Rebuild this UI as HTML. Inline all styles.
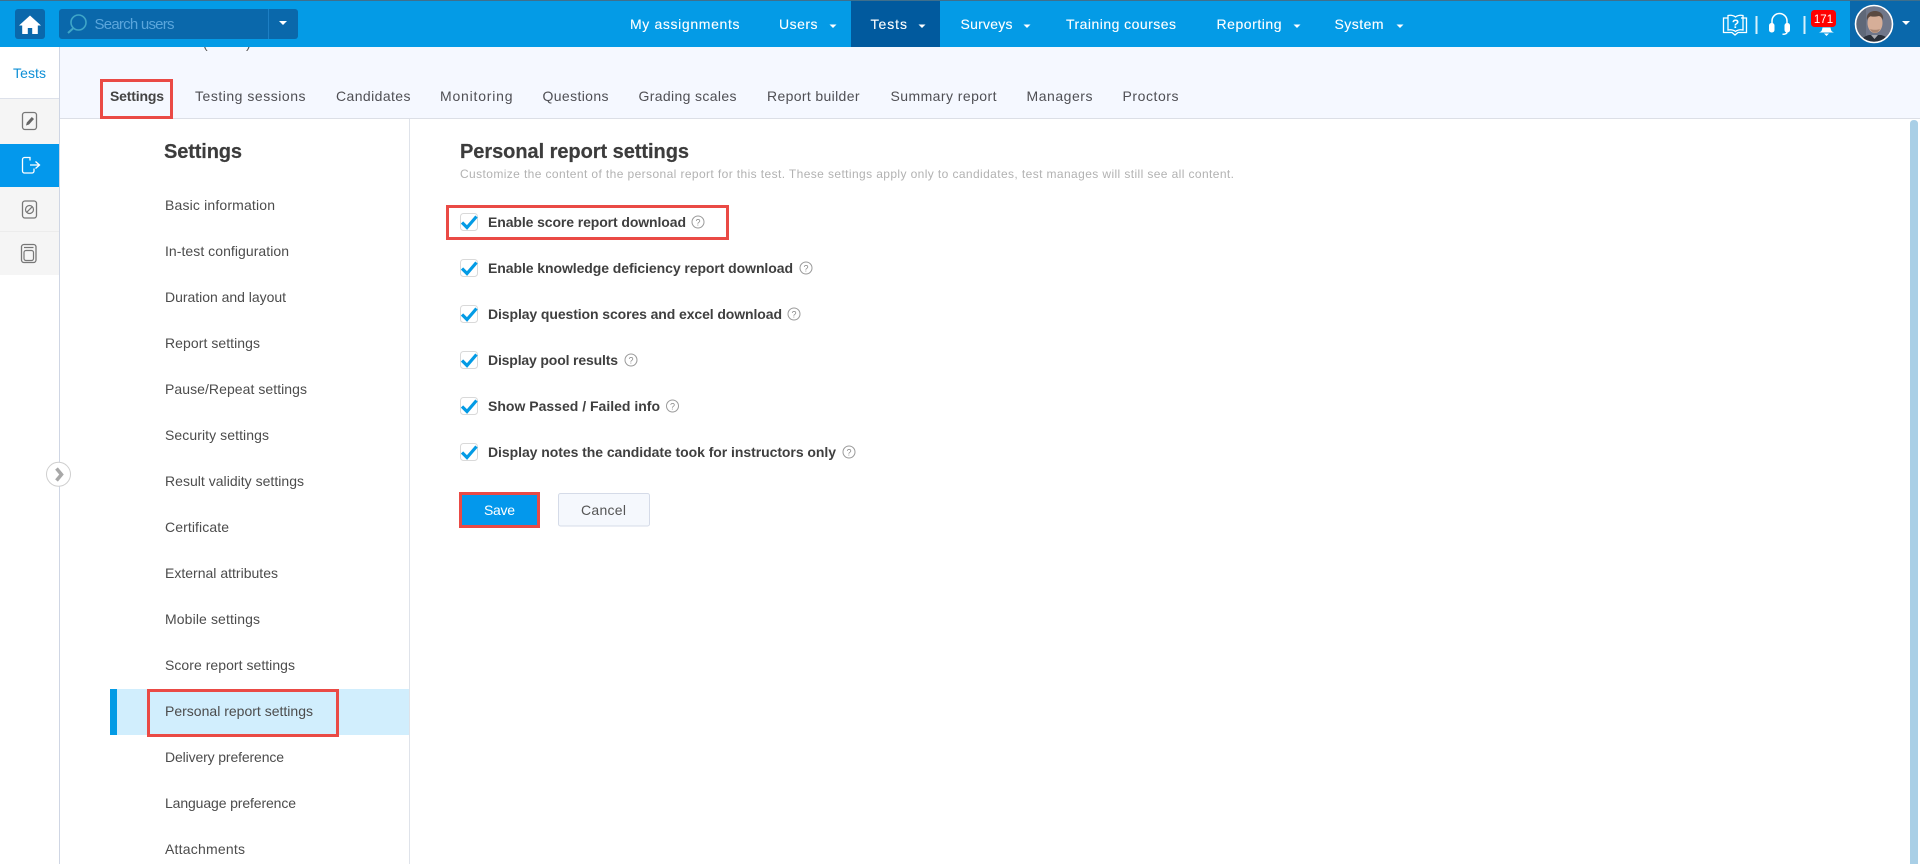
<!DOCTYPE html>
<html lang="en">
<head>
<meta charset="utf-8">
<title>Personal report settings</title>
<style>
html,body{margin:0;padding:0;width:1920px;height:864px;overflow:hidden;background:#fff}
svg{display:block}
text{font-family:"Liberation Sans",sans-serif;font-size:14px;fill:#4a4a4a}
.nav{fill:#fff;stroke:#fff;stroke-width:.1}
.tab{fill:#4f4f54}
.menu{fill:#4c4c4c}
.lbl{font-weight:700;fill:#3f3f3f}
.red{fill:none;stroke:#ea4a45;stroke-width:3}
.help circle{fill:none;stroke:#9a9a9a;stroke-width:1}
.help text{font-size:9px;fill:#8a8a8a;text-anchor:middle}
.cb rect{fill:#fff;stroke:#d9d9d9;stroke-width:1}
.cb path{fill:none;stroke:#039be5;stroke-width:3.2}
.ar{fill:#fff}
.hd{font-size:20px;font-weight:700;fill:#3c3c3c;stroke:#3c3c3c;stroke-width:.2}
</style>
</head>
<body>
<svg width="1920" height="864" viewBox="0 0 1920 864" xmlns="http://www.w3.org/2000/svg">
  <!-- page bands -->
  <rect x="59" y="47" width="1861" height="71" fill="#f5f8ff"/>
  <rect x="59" y="118" width="1861" height="1" fill="#dcdfe6"/>

  <!-- clipped breadcrumb (behind the top bar) -->
  <text x="203" y="48" style="font-size:14px;fill:#555">(</text>
  <text x="246" y="48" style="font-size:14px;fill:#555">)</text>

  <!-- top bar -->
  <rect width="1920" height="47" fill="#049be6"/>
  <rect width="1920" height="1" fill="#3f6f8c"/>
  <rect x="15" y="9" width="30" height="30" rx="3" fill="#0a68ab"/>
  <path d="M30 15.500 19 25.500h3.200V34h5.600v-6h4.400v6h5.600v-8.500H41Z" fill="#fff"/>
  <rect x="59" y="9" width="239" height="30" rx="3" fill="#0a68ab"/>
  <rect x="268" y="9" width="1" height="30" fill="#1d7fc4"/>
  <circle cx="78.500" cy="22.500" r="7.500" fill="none" stroke="#3fa6c8" stroke-width="1.600"/>
  <path d="M73 28.500 68 33" stroke="#3fa6c8" stroke-width="2" fill="none"/>
  <text x="94.500" y="29" textLength="80" style="font-size:15px;fill:#5ba6dc">Search users</text>
  <path class="ar" d="M279 21h8l-4 4Z"/>

  <rect x="851" y="1" width="89" height="46" fill="#015a9e"/>
  <g>
    <text class="nav" x="630" y="29" textLength="109.500">My assignments</text>
    <text class="nav" x="779" y="29" textLength="38.500">Users</text>
    <path class="ar" d="M829.500 24.500h7l-3.500 3.500Z"/>
    <text class="nav" x="870.500" y="29" textLength="36.500">Tests</text>
    <path class="ar" d="M918.500 24.500h7l-3.500 3.500Z"/>
    <text class="nav" x="960.500" y="29" textLength="52">Surveys</text>
    <path class="ar" d="M1023.500 24.500h7l-3.500 3.500Z"/>
    <text class="nav" x="1066" y="29" textLength="110">Training courses</text>
    <text class="nav" x="1216.500" y="29" textLength="65">Reporting</text>
    <path class="ar" d="M1293.500 24.500h7l-3.500 3.500Z"/>
    <text class="nav" x="1334.500" y="29" textLength="49">System</text>
    <path class="ar" d="M1396.500 24.500h7l-3.500 3.500Z"/>
  </g>

  <!-- right icons -->
  <g fill="none" stroke="#fff" stroke-width="1.300">
    <path d="M1728 18h-4.500v14.500h8.500l3 2.500 3-2.500h8.500V18H1741"/>
    <path d="M1728 15.500c3-.6 5.500 0 7.500 1.500 2-1.500 4.500-2.100 7.500-1.500v14.500c-3-.6-5.500 0-7.500 1.500-2-1.500-4.500-2.100-7.500-1.500Z"/>
  </g>
  <text x="1735.500" y="28" style="font-size:12px;font-weight:700;fill:#fff;text-anchor:middle">?</text>
  <rect x="1755.500" y="16" width="2" height="18" fill="#d8f0fb"/>
  <path d="M1772 26v-5a7.500 7.500 0 0 1 15 0v5" fill="none" stroke="#fff" stroke-width="1.500"/>
  <rect x="1769" y="23" width="5.500" height="9.500" rx="2.500" fill="#fff"/>
  <rect x="1784.500" y="23" width="5.500" height="9.500" rx="2.500" fill="#fff"/>
  <path d="M1787 32c0 1.500-2 2.300-4.500 2.300" fill="none" stroke="#fff" stroke-width="1.500"/>
  <rect x="1803.500" y="16" width="2" height="18" fill="#d8f0fb"/>
  <path d="M1819 32.500c2.500-.8 3-2 3.500-5h8c.5 3 1 4.200 3.500 5Z" fill="#fff"/>
  <path d="M1824 33.500h5l-2.500 2.500Z" fill="#fff"/>
  <rect x="1811" y="10" width="25" height="17" rx="3.500" fill="#f00"/>
  <text x="1823.500" y="23" style="font-size:11.500px;fill:#fff;text-anchor:middle">171</text>

  <rect x="1850" y="1" width="70" height="46" fill="#0a68ab"/>
  <clipPath id="av"><circle cx="1874" cy="24" r="18"/></clipPath>
  <g clip-path="url(#av)">
    <rect x="1855" y="5" width="38" height="38" fill="#70778a"/>
    <rect x="1855" y="5" width="11" height="38" fill="#5f6878"/>
    <path d="M1860 44c1-6 5-8 9-9h12c4 1 8 3 9 9Z" fill="#2a2f38"/>
    <path d="M1871 35l3.500 4 3.500-4Z" fill="#a9aab0"/>
    <ellipse cx="1875" cy="23" rx="7.500" ry="10" fill="#d6ae98"/>
    <path d="M1867 20c-1-6 3-9 8-9s9 3 8 9c-1-2-2-3.500-4-4-3 .8-7 .8-8.500.3-1.700.9-2.800 2-3.500 3.700Z" fill="#5a4a42"/>
    <path d="M1870 29c1.500 2.800 3 3.700 5 3.700s3.500-.9 5-3.700c-1.700.7-3.300.8-5 .8s-3.300-.1-5-.8Z" fill="#a98672"/>
  </g>
  <circle cx="1874" cy="24" r="18.500" fill="none" stroke="#fff" stroke-width="1.600"/>
  <path class="ar" d="M1902 21h8l-4 4Z"/>

  <!-- left rail -->
  <rect x="0" y="99" width="59" height="176" fill="#f5f5f5"/>
  <rect x="0" y="98" width="59" height="1" fill="#dde1ea"/>
  <rect x="0" y="144" width="59" height="43" fill="#0398ec"/>
  <rect x="0" y="231" width="59" height="1" fill="#ececec"/>
  <rect x="59" y="47" width="1" height="817" fill="#cfd6e4"/>
  <text x="13" y="78" textLength="33" style="fill:#0d8fd6">Tests</text>
  <rect x="22.500" y="112.500" width="14" height="17" rx="2.500" fill="none" stroke="#777" stroke-width="1.300"/>
  <path d="M26 125.500l.8-3 5-5.500 2.200 2-5 5.500Z" fill="#666"/>
  <path d="M30 160.500V157.500h-5.500a2 2 0 0 0-2 2v11.500a2 2 0 0 0 2 2h7.500a2 2 0 0 0 2-2v-2.500M30 165h9M35.500 161.500l4 3.500-4 3.500" fill="none" stroke="#fff" stroke-width="1.300"/>
  <rect x="22.500" y="201" width="14" height="17" rx="2.500" fill="none" stroke="#777" stroke-width="1.300"/>
  <circle cx="29.500" cy="209.500" r="4" fill="none" stroke="#777" stroke-width="1.200"/>
  <path d="M26.800 212.200l5.400-5.400" stroke="#777" stroke-width="1.200"/>
  <rect x="21.500" y="244.500" width="14.500" height="18" rx="2.500" fill="none" stroke="#777" stroke-width="1.300"/>
  <rect x="24" y="250.500" width="9.500" height="10" rx="2" fill="none" stroke="#777" stroke-width="1.200"/>
  <path d="M24 247.500h9.500" stroke="#777" stroke-width="1.200"/>

  <!-- expand button -->
  <circle cx="58.500" cy="474.300" r="12" fill="#fff" stroke="#cfcfcf" stroke-width="1"/>
  <path d="M56.500 468.500l5 6-5 6" fill="none" stroke="#a8a8a8" stroke-width="3.500"/>

  <!-- tabs -->
  <text x="110" y="101" textLength="54" style="font-weight:700;fill:#444">Settings</text>
  <text class="tab" x="195" y="101" textLength="110.500">Testing sessions</text>
  <text class="tab" x="336" y="101" textLength="74.500">Candidates</text>
  <text class="tab" x="440" y="101" textLength="72.500">Monitoring</text>
  <text class="tab" x="542.500" y="101" textLength="66">Questions</text>
  <text class="tab" x="638.500" y="101" textLength="98">Grading scales</text>
  <text class="tab" x="767" y="101" textLength="92.500">Report builder</text>
  <text class="tab" x="890.500" y="101" textLength="106">Summary report</text>
  <text class="tab" x="1026.500" y="101" textLength="66">Managers</text>
  <text class="tab" x="1122.500" y="101" textLength="56">Proctors</text>
  <rect class="red" x="101.500" y="80.500" width="70" height="37"/>

  <!-- settings menu -->
  <rect x="409" y="119" width="1" height="745" fill="#dfe3ea"/>
  <text class="hd" x="164" y="158" textLength="78">Settings</text>
  <rect x="110" y="689" width="299" height="46" fill="#d1eefd"/>
  <rect x="110" y="689" width="7" height="46" fill="#039be5"/>
  <g>
    <text class="menu" x="165" y="210" textLength="110">Basic information</text>
    <text class="menu" x="165" y="256" textLength="124">In-test configuration</text>
    <text class="menu" x="165" y="302" textLength="121">Duration and layout</text>
    <text class="menu" x="165" y="348" textLength="95">Report settings</text>
    <text class="menu" x="165" y="394" textLength="142">Pause/Repeat settings</text>
    <text class="menu" x="165" y="440" textLength="104">Security settings</text>
    <text class="menu" x="165" y="486" textLength="139">Result validity settings</text>
    <text class="menu" x="165" y="532" textLength="64">Certificate</text>
    <text class="menu" x="165" y="578" textLength="113">External attributes</text>
    <text class="menu" x="165" y="624" textLength="95">Mobile settings</text>
    <text class="menu" x="165" y="670" textLength="130">Score report settings</text>
    <text class="menu" x="165" y="716" textLength="148">Personal report settings</text>
    <text class="menu" x="165" y="762" textLength="119">Delivery preference</text>
    <text class="menu" x="165" y="808" textLength="131">Language preference</text>
    <text class="menu" x="165" y="854" textLength="80">Attachments</text>
  </g>
  <rect class="red" x="148.500" y="690.500" width="189" height="45"/>

  <!-- main content -->
  <text class="hd" x="460" y="158" textLength="229">Personal report settings</text>
  <text x="460" y="178" textLength="774" style="font-size:12px;fill:#b2b2b2">Customize the content of the personal report for this test. These settings apply only to candidates, test manages will still see all content.</text>

  <g class="cb"><rect x="460.500" y="213.500" width="17" height="17" rx="3"/><path d="M462 222.500l5 5 9.500-11"/></g>
  <g class="cb"><rect x="460.500" y="259.500" width="17" height="17" rx="3"/><path d="M462 268.500l5 5 9.500-11"/></g>
  <g class="cb"><rect x="460.500" y="305.500" width="17" height="17" rx="3"/><path d="M462 314.500l5 5 9.500-11"/></g>
  <g class="cb"><rect x="460.500" y="351.500" width="17" height="17" rx="3"/><path d="M462 360.500l5 5 9.500-11"/></g>
  <g class="cb"><rect x="460.500" y="397.500" width="17" height="17" rx="3"/><path d="M462 406.500l5 5 9.500-11"/></g>
  <g class="cb"><rect x="460.500" y="443.500" width="17" height="17" rx="3"/><path d="M462 452.500l5 5 9.500-11"/></g>

  <text class="lbl" x="488" y="227" textLength="198">Enable score report download</text>
  <text class="lbl" x="488" y="273" textLength="305">Enable knowledge deficiency report download</text>
  <text class="lbl" x="488" y="319" textLength="294">Display question scores and excel download</text>
  <text class="lbl" x="488" y="365" textLength="130">Display pool results</text>
  <text class="lbl" x="488" y="411" textLength="172">Show Passed / Failed info</text>
  <text class="lbl" x="488" y="457" textLength="348">Display notes the candidate took for instructors only</text>

  <g class="help"><circle cx="698" cy="222" r="6"/><text x="698" y="225.500">?</text></g>
  <g class="help"><circle cx="806" cy="268" r="6"/><text x="806" y="271.500">?</text></g>
  <g class="help"><circle cx="794" cy="314" r="6"/><text x="794" y="317.500">?</text></g>
  <g class="help"><circle cx="631" cy="360" r="6"/><text x="631" y="363.500">?</text></g>
  <g class="help"><circle cx="672.500" cy="406" r="6"/><text x="672.500" y="409.500">?</text></g>
  <g class="help"><circle cx="849" cy="452" r="6"/><text x="849" y="455.500">?</text></g>

  <rect class="red" x="447.500" y="206.500" width="280" height="32"/>

  <rect x="460" y="493" width="79" height="34" fill="#0398ec"/>
  <rect class="red" x="460.500" y="493.500" width="78" height="33"/>
  <text x="484" y="515" textLength="31" style="fill:#fff">Save</text>
  <rect x="558.500" y="493.500" width="91" height="32.500" rx="2" fill="#f5f8fd" stroke="#d5dbe8"/>
  <text x="581" y="515" textLength="45" style="fill:#555">Cancel</text>

  <!-- scrollbar -->
  <path d="M1910 124q0-4 4-4t4 4V864h-8Z" fill="#a9cfe6"/>
</svg>
</body>
</html>
